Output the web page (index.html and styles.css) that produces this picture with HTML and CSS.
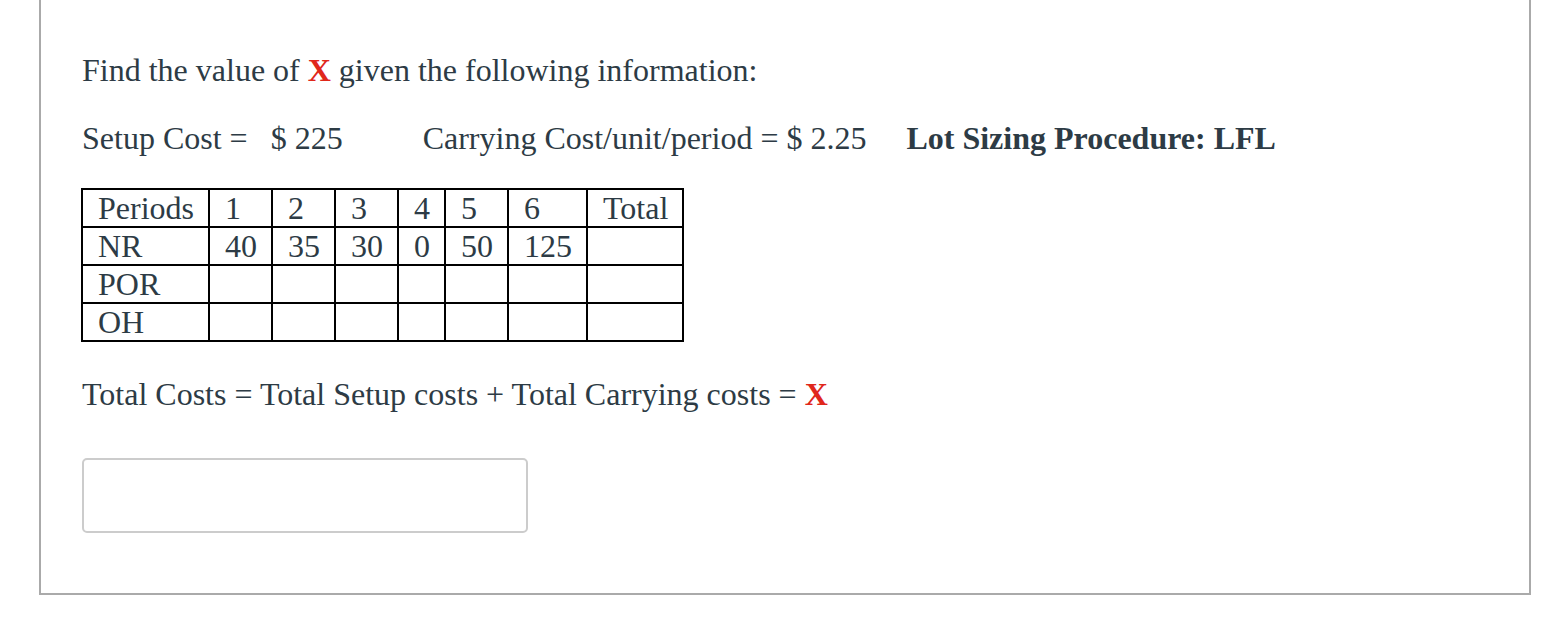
FILE: index.html
```html
<!DOCTYPE html>
<html>
<head>
<meta charset="utf-8">
<link rel="stylesheet" href="styles.css">
</head>
<body>
<div class="card">
  <p class="line first">Find the value of <b class="x">X</b> given the following information:</p>
  <p class="line second"><span>Setup Cost =</span><span class="gap1">$ 225</span><span class="gap2">Carrying Cost/unit/period = $ 2.25</span><b class="gap3">Lot Sizing Procedure: LFL</b></p>
  <table class="mrp">
    <tr><td>Periods</td><td>1</td><td>2</td><td>3</td><td>4</td><td>5</td><td>6</td><td>Total</td></tr>
    <tr><td>NR</td><td>40</td><td>35</td><td>30</td><td>0</td><td>50</td><td>125</td><td></td></tr>
    <tr><td>POR</td><td></td><td></td><td></td><td></td><td></td><td></td><td></td></tr>
    <tr><td>OH</td><td></td><td></td><td></td><td></td><td></td><td></td><td></td></tr>
  </table>
  <p class="line third">Total Costs = Total Setup costs + Total Carrying costs = <b class="x">X</b></p>
  <div class="answer"></div>
</div>
</body>
</html>
```

FILE: styles.css
```css
html, body {
  margin: 0;
  padding: 0;
  background: #fff;
}
body {
  font-family: "Liberation Serif", "Times New Roman", serif;
  color: #2d3b45;
}
.card {
  margin-left: 39px;
  height: 593px;
  border: 2px solid #aaaaaa;
  border-top: none;
  padding: 0 0 0 41px;
  box-sizing: content-box;
  width: 1447px;
}
.line {
  margin: 0;
  font-size: 32px;
  line-height: 37px;
}
.first {
  padding-top: 52px;
}
.second {
  margin-top: 31px;
}
.x {
  color: #e0271b;
}
.gap1 { margin-left: 23px; }
.gap2 { margin-left: 80px; }
.gap3 { margin-left: 40px; }
.mrp {
  margin-top: 31px;
  border-collapse: collapse;
  font-size: 32px;
  color: #2d3b45;
  margin-left: -1px;
}
.mrp td {
  border: 2px solid #000;
  height: 36px;
  padding: 0 14px 0 15px;
  line-height: 36px;
  text-align: left;
  vertical-align: middle;
}
.third {
  margin-top: 34px;
}
.answer {
  margin-top: 45px;
  width: 442px;
  height: 71px;
  border: 2px solid #cccccc;
  border-radius: 5px;
}
```
